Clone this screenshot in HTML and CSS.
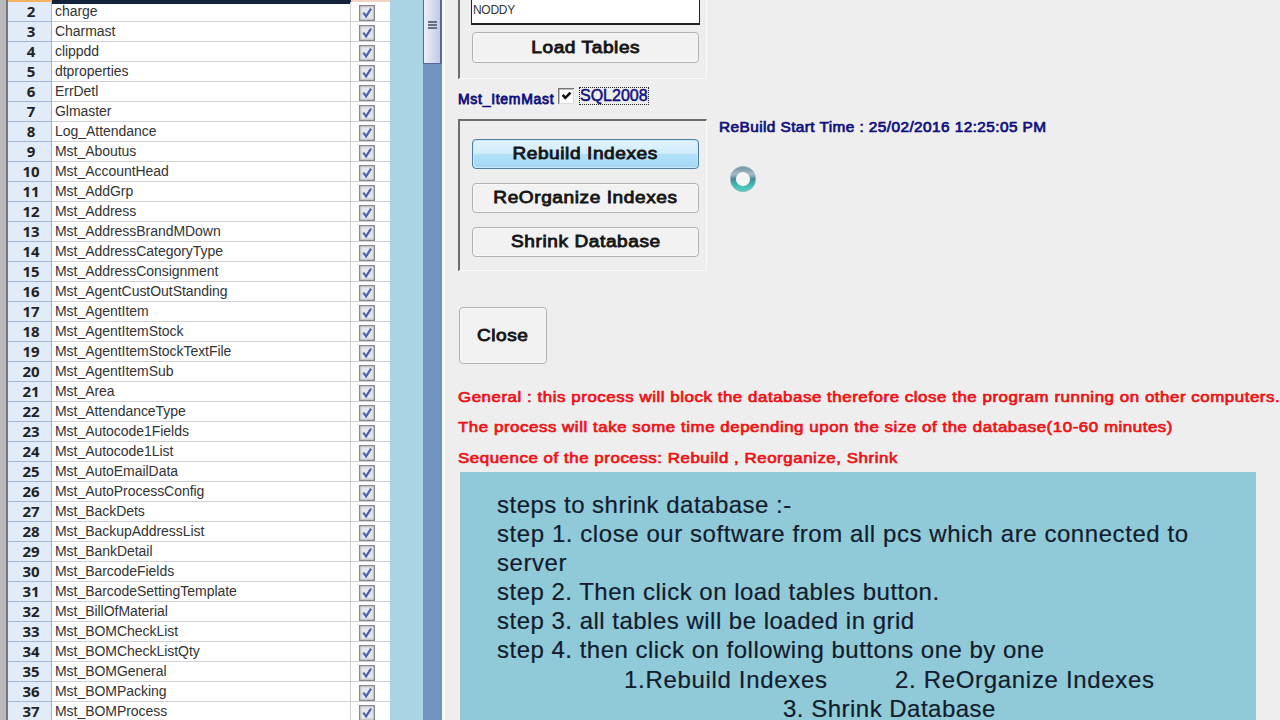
FILE: index.html
```
<!DOCTYPE html>
<html lang="en">
<head>
  <meta charset="UTF-8" />
  <title>Database Indexes</title>
  <link rel="stylesheet" href="styles.css">
</head>
<body>

<div class="gridPane">
  <div class="grid">
    <div class="row selected"><div class="num"></div><div class="name"></div><div class="check"></div></div>
    <div id="rows"></div>
  </div>
  <div class="gridBlank"></div>
  <div class="scrollbar"><div class="thumb"><i></i><i></i><i></i></div></div>
</div>

<div class="main">
  <div class="panel loadPanel">
    <div class="listbox">NODDY</div>
    <button><span>Load Tables</span></button>
  </div>

  <div class="options">
    <span class="tableName">Mst_ItemMast</span>
    <svg class="sqlCheck" width="16" height="16" viewBox="0 0 16 16">
      <rect x="0" y="0" width="16" height="16" fill="#fff"/>
      <path d="M.7 16V.7H16" fill="none" stroke="#77777a" stroke-width="1.5"/>
      <path d="M15.5 1V15.5H1" fill="none" stroke="#dcdcdc"/>
      <path d="M4.6 6.8l2.7 3L12.5 4.6" fill="none" stroke="#111" stroke-width="2.6"/>
    </svg>
    <span class="sqlLabel">SQL2008</span>
  </div>

  <div class="actions">
    <div class="panel actionPanel">
      <button class="active"><span>Rebuild Indexes</span></button>
      <button><span>ReOrganize Indexes</span></button>
      <button><span>Shrink Database</span></button>
    </div>
    <div class="status">
      <div class="startTime">ReBuild Start Time : 25/02/2016 12:25:05 PM</div>
      <svg class="busy" width="28" height="28" viewBox="0 0 28 28">
        <defs>
          <linearGradient id="ring" x1="0" y1="0" x2="0" y2="1">
            <stop offset="0" stop-color="#7d9fac"/>
            <stop offset=".25" stop-color="#a9bfc8"/>
            <stop offset=".5" stop-color="#4b8794"/>
            <stop offset=".75" stop-color="#38b5b0"/>
            <stop offset="1" stop-color="#4fc9bd"/>
          </linearGradient>
        </defs>
        <circle cx="14" cy="14" r="10" fill="#f4f5f5" stroke="#9fb9bf" stroke-width="6"/>
        <circle cx="14" cy="14" r="9.8" fill="none" stroke="url(#ring)" stroke-width="5"/>
      </svg>
    </div>
  </div>

  <button class="close"><span>Close</span></button>

  <div class="warning">
    <p>General : this process will block the database therefore close the program running on other computers.</p>
    <p>The process will take some time depending upon the size of the database(10-60 minutes)</p>
    <p>Sequence of the process: Rebuild , Reorganize, Shrink</p>
  </div>

  <div class="steps">
    <p>steps to shrink database :-</p>
    <p class="wide">step 1. close our software from all pcs which are connected to<br>server</p>
    <p>step 2. Then click on load tables button.</p>
    <p>step 3. all tables will be loaded in grid</p>
    <p>step 4. then click on following buttons one by one</p>
    <p class="order"><span>1.Rebuild Indexes</span><span>2. ReOrganize Indexes</span></p>
    <p class="last">3. Shrink Database</p>
  </div>
</div>

<script>
  const tables = [
    "charge", "Charmast", "clippdd", "dtproperties", "ErrDetl", "Glmaster",
    "Log_Attendance", "Mst_Aboutus", "Mst_AccountHead", "Mst_AddGrp",
    "Mst_Address", "Mst_AddressBrandMDown", "Mst_AddressCategoryType",
    "Mst_AddressConsignment", "Mst_AgentCustOutStanding", "Mst_AgentItem",
    "Mst_AgentItemStock", "Mst_AgentItemStockTextFile", "Mst_AgentItemSub",
    "Mst_Area", "Mst_AttendanceType", "Mst_Autocode1Fields",
    "Mst_Autocode1List", "Mst_AutoEmailData", "Mst_AutoProcessConfig",
    "Mst_BackDets", "Mst_BackupAddressList", "Mst_BankDetail",
    "Mst_BarcodeFields", "Mst_BarcodeSettingTemplate", "Mst_BillOfMaterial",
    "Mst_BOMCheckList", "Mst_BOMCheckListQty", "Mst_BOMGeneral",
    "Mst_BOMPacking", "Mst_BOMProcess"
  ];

  const tick = `<svg width="16" height="16" viewBox="0 0 16 16">
    <rect x=".7" y=".7" width="14.6" height="14.6" fill="#f4f4f4" stroke="#85878a" stroke-width="1.4"/>
    <rect x="2.5" y="2.5" width="11" height="11" fill="#e6e8ec" stroke="#d6d9dd"/>
    <path d="M4.3 7.6l2.8 3.8L12 3.6" fill="none" stroke="#4f61ae" stroke-width="2.2"/>
  </svg>`;

  document.getElementById("rows").innerHTML = tables.map((name, i) => `
    <div class="row">
      <div class="num">${i + 2}</div>
      <div class="name">${name}</div>
      <div class="check">${tick}</div>
    </div>`).join("");
</script>

</body>
</html>
```
FILE: styles.css
```
body {
  margin: 0;
  width: 1280px;
  height: 720px;
  overflow: hidden;
  display: flex;
  background: #eeeeee;
  font-family: "Liberation Sans", Arial, sans-serif;
}

p {
  margin: 0;
}

/* table grid */
.gridPane {
  display: flex;
  flex: none;
  width: 436px;
  height: 720px;
  border-left: 6px solid #b9b9bb;
  border-right: 1px solid #f8f9fb;
  box-shadow: inset 2px 0 #77787c, 2px 0 #f8f9fb;
}

.grid {
  flex: none;
  width: 382px;
  margin-left: 2px;
  background: #fff;
}

.row {
  display: flex;
  height: 20px;
}

.row > div {
  box-sizing: border-box;
  border-bottom: 1px solid #d0d1d4;
}

.row .num {
  width: 44px;
  padding-left: 3px;
  background: #e2ebf8;
  border-right: 1px solid #a3b5d2;
  border-bottom-color: #a3b5d2;
  font: bold 15px/19px "Open Sans", sans-serif;
  text-align: center;
  color: #222;
}

.row .name {
  width: 299px;
  padding-left: 3px;
  border-right: 1px solid #d0d1d4;
  font-size: 14px;
  line-height: 19px;
  letter-spacing: -0.04px;
  color: #333;
  white-space: nowrap;
}

.row .check {
  width: 39px;
  padding: 3px 0 0 8px;
}

.row .check svg {
  display: block;
}

.row.selected {
  height: 2px;
}

.row.selected > div {
  border: 0;
  padding: 0;
}

.row.selected .num {
  background: #f4b163;
}

.row.selected .name {
  height: 4px;
  background: #14233c;
}

.row.selected .check {
  background: #f2d3c1;
}

.gridBlank {
  width: 33px;
  background: #a8d4e4;
}

.scrollbar {
  width: 19px;
  background: #7195c0;
}

.thumb {
  box-sizing: border-box;
  height: 64px;
  padding: 21px 3px 0 4px;
  border: solid #56689a;
  border-width: 0 2px 1px 1px;
  background: linear-gradient(90deg, #eceffa, #c3c9e4);
}

.thumb i {
  display: block;
  height: 2px;
  margin-bottom: 1px;
  background: #666e84;
}

/* right side */
.main {
  flex: 1;
  padding-left: 15px;
  min-width: 0;
}

button {
  display: block;
  box-sizing: border-box;
  width: 227px;
  height: 31px;
  padding: 0;
  border: 1px solid #b2b2b4;
  border-radius: 4px;
  background: #f2f2f2;
  box-shadow: inset 0 0 0 1px #f8f8f8;
  font: 16px "Liberation Sans", Arial, sans-serif;
  letter-spacing: 0.5px;
  color: #151515;
  -webkit-text-stroke: 0.8px;
}

button span {
  display: inline-block;
  transform: scaleX(1.19);
}

button.active {
  border-color: #4c7f9f;
  background: linear-gradient(#e2f3fc 0, #cfecfb 48%, #b2dff8 52%, #a5d8f3 100%);
  box-shadow: inset 0 0 0 1px #c5eafa;
}

.panel {
  box-sizing: border-box;
  width: 249px;
  padding-left: 12px;
  border-left: 2px solid #6d6d6d;
  border-right: 1px solid #fafafa;
  border-bottom: 1px solid #fafafa;
}

.loadPanel {
  height: 79px;
}

.listbox {
  box-sizing: border-box;
  width: 229px;
  height: 25px;
  margin: 0 0 7px -1px;
  padding-left: 1px;
  border: 1px solid #222;
  border-top: 0;
  border-bottom-width: 2px;
  background: #fff;
  font-size: 12px;
  line-height: 20px;
  letter-spacing: -0.3px;
  color: #333;
}

.options {
  display: flex;
  height: 40px;
  color: #10107c;
}

.tableName {
  width: 100px;
  padding-top: 12px;
  font-size: 14px;
  letter-spacing: 0.7px;
  -webkit-text-stroke: 0.8px;
}

.sqlCheck {
  margin-top: 9px;
}

.sqlLabel {
  box-sizing: border-box;
  width: 70px;
  height: 18px;
  margin: 8px 0 0 5px;
  border: 1px dotted #222;
  font-size: 16px;
  line-height: 16px;
  -webkit-text-stroke: 0.5px;
}

.actions {
  display: flex;
}

.actionPanel {
  height: 152px;
  padding-top: 18px;
  border-top: 2px solid #6d6d6d;
}

.actionPanel button {
  height: 30px;
  margin-bottom: 14px;
}

.status {
  padding-left: 12px;
}

.startTime {
  height: 46px;
  font-size: 14.5px;
  line-height: 17px;
  letter-spacing: 0.4px;
  color: #10107c;
  white-space: nowrap;
  transform: scaleX(1.06);
  transform-origin: left;
  -webkit-text-stroke: 0.7px;
}

.busy {
  display: block;
  margin-left: 10px;
}

.close {
  width: 88px;
  height: 57px;
  margin: 36px 0 0 1px;
}

.warning {
  height: 108px;
  padding-top: 18px;
  box-sizing: border-box;
  font-size: 15px;
  color: #ee1216;
  letter-spacing: 0.5px;
  white-space: nowrap;
  -webkit-text-stroke: 0.7px;
}

.warning p {
  width: max-content;
  height: 30.3px;
  line-height: 30px;
  transform: scaleX(1.123);
  transform-origin: left;
}

/* instructions box */
.steps {
  box-sizing: border-box;
  width: 796px;
  height: 248px;
  margin-left: 2px;
  padding: 18px 0 0 37px;
  background: #90cad9;
  font-size: 24px;
  line-height: 29.1px;
  letter-spacing: 0.49px;
  color: #111c2c;
  white-space: nowrap;
  -webkit-text-stroke: 0.2px;
}

.wide {
  letter-spacing: 0.57px;
}

.order {
  display: flex;
  padding-left: 127px;
  letter-spacing: 0.68px;
}

.order span:first-child {
  width: 271px;
}

.last {
  padding-left: 286px;
}
```
